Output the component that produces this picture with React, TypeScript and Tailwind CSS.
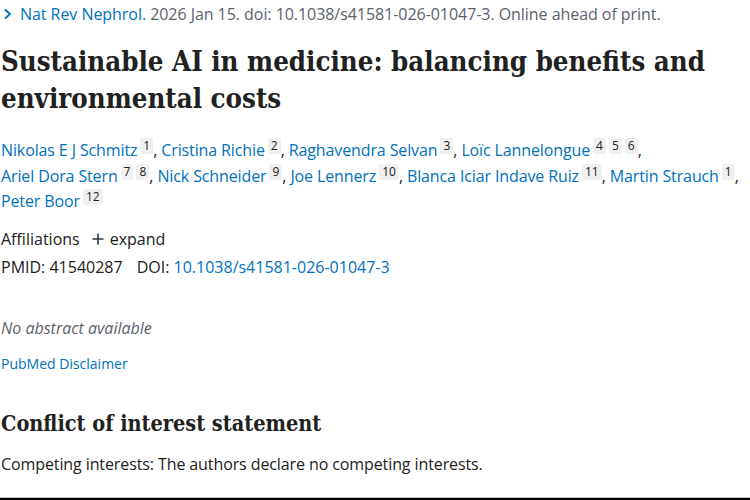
import React from "react";

function Sup({ n }: { n: string }) {
  return (
    <span className="relative -top-[6px] ml-[3px] inline-block rounded-[2px] bg-[#f0f0f0] px-[3px] text-[12px] leading-[16px] tracking-normal text-[#212121]">
      {n}
    </span>
  );
}

function Author({ name, sups, last }: { name: string; sups: string[]; last?: boolean }) {
  return (
    <>
      <span className="whitespace-nowrap">
        <span className="text-[#0071bc]">{name}</span>
        {sups.map((s, i) => (
          <Sup key={i} n={s} />
        ))}
        {last ? "" : ","}
      </span>
      {last ? "" : " "}
    </>
  );
}

export default function App() {
  return (
    <div className="h-[500px] w-[750px] overflow-hidden bg-white text-[#212121] [font-family:'Open_Sans','Noto_Sans',sans-serif]">
      <div className="flex h-[497px] flex-col pl-[1px]">
        <div className="mt-[3px] flex items-center text-[16px] leading-[22px] tracking-[-0.05px] text-[#5b616b]">
          <svg width="10" height="12" viewBox="0 0 10 12" className="ml-[2px] mr-[7px]">
            <path d="M2 1.5 L7 6 L2 10.5" stroke="#0071bc" strokeWidth="1.8" fill="none" />
          </svg>
          <span className="text-[#0071bc]">Nat Rev Nephrol.</span>
          <span>&nbsp;2026 Jan 15. doi: 10.1038/s41581-026-01047-3. Online ahead of print.</span>
        </div>
        <h1 className="mt-[18px] text-[27.4px] font-bold leading-[37px] text-[#212121] [font-family:'DejaVu_Serif_Condensed','DejaVu_Serif',serif] [font-stretch:condensed]">
          Sustainable AI in medicine: balancing benefits and environmental costs
        </h1>
        <div className="mt-[21px] text-[16px] leading-[25.5px] tracking-[-0.12px]">
          <Author name="Nikolas E J Schmitz" sups={["1"]} />
          <Author name="Cristina Richie" sups={["2"]} />
          <Author name="Raghavendra Selvan" sups={["3"]} />
          <Author name="Loïc Lannelongue" sups={["4", "5", "6"]} />
          <Author name="Ariel Dora Stern" sups={["7", "8"]} />
          <Author name="Nick Schneider" sups={["9"]} />
          <Author name="Joe Lennerz" sups={["10"]} />
          <Author name="Blanca Iciar Indave Ruiz" sups={["11"]} />
          <Author name="Martin Strauch" sups={["1"]} />
          <Author name="Peter Boor" sups={["12"]} last />
        </div>
        <div className="mt-[13px] flex items-center text-[16px] leading-[22px]">
          <span>Affiliations</span>
          <span className="ml-[12px] flex items-center">
            <svg width="12" height="12" viewBox="0 0 12 12" className="mr-[6px]">
              <path d="M6 0.5 V11.5 M0.5 6 H11.5" stroke="#333" strokeWidth="1.6" />
            </svg>
            expand
          </span>
        </div>
        <div className="mt-[6px] text-[16px] leading-[22px]">
          <span>PMID: 41540287</span>
          <span className="ml-[14px]">DOI: </span>
          <span className="text-[#0071bc]">10.1038/s41581-026-01047-3</span>
        </div>
        <div className="mt-[39px] text-[16px] italic leading-[22px] text-[#5b616b]">No abstract available</div>
        <div className="mt-[15px] text-[14px] leading-[20px] text-[#0071bc]">PubMed Disclaimer</div>
        <h2 className="mt-[35px] text-[21.5px] font-bold leading-[30px] [font-family:'DejaVu_Serif_Condensed','DejaVu_Serif',serif] [font-stretch:condensed]">
          Conflict of interest statement
        </h2>
        <div className="mt-[14px] text-[16px] leading-[22px] tracking-[-0.1px]">
          Competing interests: The authors declare no competing interests.
        </div>
      </div>
      <div className="h-[1px] bg-[#c8c8c8]" />
      <div className="h-[2px] bg-black" />
    </div>
  );
}
